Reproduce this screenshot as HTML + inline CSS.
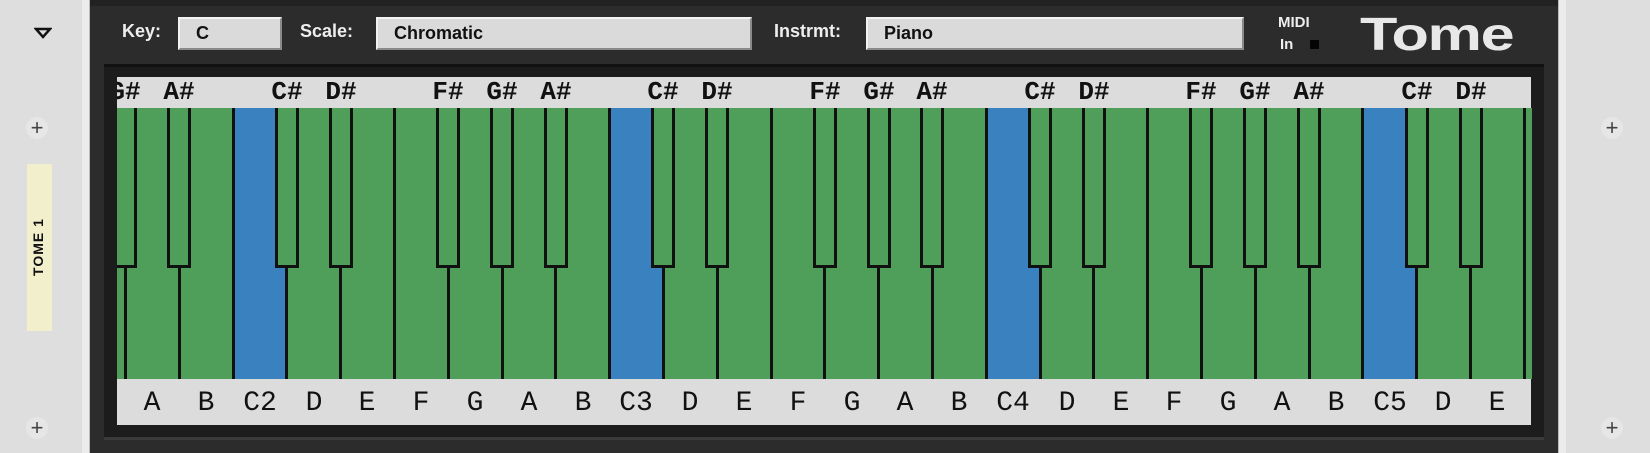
<!DOCTYPE html>
<html><head><meta charset="utf-8"><style>
*{margin:0;padding:0;box-sizing:border-box}
body{width:1650px;height:453px;overflow:hidden;background:#dcdcdc;position:relative;font-family:"Liberation Sans",sans-serif}
.a{position:absolute}
.rail{background:#dedede}
.plus{position:absolute;width:22px;height:22px;border-radius:50%;background:#e6e6e6;color:#444;font-size:22px;line-height:22px;text-align:center;font-weight:normal}
.lbl{position:absolute;color:#eee;font-weight:bold;font-size:18px;top:21px}
.box{position:absolute;top:17px;height:33px;background:#dadada;border-top:2px solid #f2f2f2;border-left:2px solid #f2f2f2;border-bottom:2px solid #8a8a8a;border-right:2px solid #8a8a8a;font-weight:bold;font-size:18px;line-height:28px;padding-left:16px;color:#111}
.sep{position:absolute;top:108px;width:3px;height:271px;background:#111}
.blk{position:absolute;top:108px;width:24px;height:160px;background:#4f9f5b;border:3px solid #111;border-top:none}
.blue{position:absolute;top:108px;height:271px;background:#3a82bf}
.t{position:absolute;top:78px;width:60px;margin-left:-30px;text-align:center;font-family:"Liberation Mono",monospace;font-weight:bold;font-size:26px;color:#111;line-height:28px}
.b{position:absolute;top:388px;width:60px;margin-left:-30px;text-align:center;font-family:"Liberation Mono",monospace;font-size:28px;color:#111;line-height:32px}
</style></head><body>
<div class="a rail" style="left:0;top:0;width:82px;height:453px"></div>
<div class="a" style="left:82px;top:0;width:8px;height:453px;background:#ececec;border-right:1px solid #bbb"></div>
<div class="a" style="left:1558px;top:0;width:8px;height:453px;background:#ececec;border-left:1px solid #bbb"></div>
<div class="a rail" style="left:1566px;top:0;width:84px;height:453px"></div>
<svg class="a" style="left:34px;top:27px" width="18" height="12"><polygon points="2,2 16,2 9,10" fill="none" stroke="#111" stroke-width="2.5"/></svg>
<div class="plus" style="left:26px;top:117px">+</div>
<div class="plus" style="left:26px;top:417px">+</div>
<div class="plus" style="left:1601px;top:117px">+</div>
<div class="plus" style="left:1601px;top:417px">+</div>
<div class="a" style="left:27px;top:164px;width:25px;height:167px;background:#f2efcc"></div>
<div class="a" style="left:-20px;top:237px;width:120px;height:20px;transform:rotate(-90deg);text-align:center;font-weight:bold;font-size:14px;color:#111;letter-spacing:1px">TOME 1</div>

<div class="a" style="left:90px;top:0;width:1468px;height:453px;background:#2c2c2c"></div>
<div class="a" style="left:90px;top:0;width:1468px;height:6px;background:#222"></div>
<div class="a" style="left:104px;top:64px;width:1440px;height:376px;background:#1c1c1c;border-top:3px solid #111;border-bottom:3px solid #3a3a3a"></div>

<div class="lbl" style="left:122px">Key:</div>
<div class="box" style="left:178px;width:104px">C</div>
<div class="lbl" style="left:300px">Scale:</div>
<div class="box" style="left:376px;width:376px">Chromatic</div>
<div class="lbl" style="left:774px">Instrmt:</div>
<div class="box" style="left:866px;width:378px">Piano</div>
<div class="a" style="left:1278px;top:14px;color:#eee;font-weight:bold;font-size:15px">MIDI</div>
<div class="a" style="left:1280px;top:36px;color:#eee;font-weight:bold;font-size:15px">In</div>
<div class="a" style="left:1310px;top:40px;width:9px;height:9px;background:#050505"></div>
<div class="a" style="left:1360px;top:9px;color:#e8e8e8;font-weight:bold;font-size:46px;line-height:50px;transform:scaleX(1.33);transform-origin:left;letter-spacing:-1px">Tome</div>

<div class="a" style="left:117px;top:77px;width:1414px;height:31px;background:#dcdcdc"></div>
<div class="a" style="left:117px;top:108px;width:1415px;height:271px;background:#4f9f5b"></div>
<div class="a" style="left:117px;top:379px;width:1414px;height:46px;background:#dcdcdc"></div>

<div class="a" style="left:117px;top:0;width:1415px;height:453px;overflow:hidden">
<div style="position:absolute;left:-117px;top:0;width:1650px;height:453px">
<div class="blue" style="left:233px;width:54px"></div>
<div class="blue" style="left:610px;width:54px"></div>
<div class="blue" style="left:986px;width:54px"></div>
<div class="blue" style="left:1363px;width:54px"></div>
<div class="sep" style="left:124px"></div><div class="sep" style="left:178px"></div><div class="sep" style="left:232px"></div><div class="sep" style="left:285px"></div><div class="sep" style="left:339px"></div><div class="sep" style="left:393px"></div><div class="sep" style="left:447px"></div><div class="sep" style="left:501px"></div><div class="sep" style="left:554px"></div><div class="sep" style="left:608px"></div><div class="sep" style="left:662px"></div><div class="sep" style="left:716px"></div><div class="sep" style="left:770px"></div><div class="sep" style="left:823px"></div><div class="sep" style="left:877px"></div><div class="sep" style="left:931px"></div><div class="sep" style="left:985px"></div><div class="sep" style="left:1039px"></div><div class="sep" style="left:1092px"></div><div class="sep" style="left:1146px"></div><div class="sep" style="left:1200px"></div><div class="sep" style="left:1254px"></div><div class="sep" style="left:1308px"></div><div class="sep" style="left:1361px"></div><div class="sep" style="left:1415px"></div><div class="sep" style="left:1469px"></div><div class="sep" style="left:1523px"></div>
<div class="blk" style="left:113px"></div><div class="blk" style="left:167px"></div><div class="blk" style="left:275px"></div><div class="blk" style="left:329px"></div><div class="blk" style="left:436px"></div><div class="blk" style="left:490px"></div><div class="blk" style="left:544px"></div><div class="blk" style="left:651px"></div><div class="blk" style="left:705px"></div><div class="blk" style="left:813px"></div><div class="blk" style="left:867px"></div><div class="blk" style="left:920px"></div><div class="blk" style="left:1028px"></div><div class="blk" style="left:1082px"></div><div class="blk" style="left:1189px"></div><div class="blk" style="left:1243px"></div><div class="blk" style="left:1297px"></div><div class="blk" style="left:1405px"></div><div class="blk" style="left:1459px"></div>
<div class="t" style="left:125px">G#</div><div class="t" style="left:179px">A#</div><div class="t" style="left:287px">C#</div><div class="t" style="left:341px">D#</div><div class="t" style="left:448px">F#</div><div class="t" style="left:502px">G#</div><div class="t" style="left:556px">A#</div><div class="t" style="left:663px">C#</div><div class="t" style="left:717px">D#</div><div class="t" style="left:825px">F#</div><div class="t" style="left:879px">G#</div><div class="t" style="left:932px">A#</div><div class="t" style="left:1040px">C#</div><div class="t" style="left:1094px">D#</div><div class="t" style="left:1201px">F#</div><div class="t" style="left:1255px">G#</div><div class="t" style="left:1309px">A#</div><div class="t" style="left:1417px">C#</div><div class="t" style="left:1471px">D#</div>
<div class="b" style="left:152px">A</div><div class="b" style="left:206px">B</div><div class="b" style="left:260px">C2</div><div class="b" style="left:314px">D</div><div class="b" style="left:367px">E</div><div class="b" style="left:421px">F</div><div class="b" style="left:475px">G</div><div class="b" style="left:529px">A</div><div class="b" style="left:583px">B</div><div class="b" style="left:636px">C3</div><div class="b" style="left:690px">D</div><div class="b" style="left:744px">E</div><div class="b" style="left:798px">F</div><div class="b" style="left:852px">G</div><div class="b" style="left:905px">A</div><div class="b" style="left:959px">B</div><div class="b" style="left:1013px">C4</div><div class="b" style="left:1067px">D</div><div class="b" style="left:1121px">E</div><div class="b" style="left:1174px">F</div><div class="b" style="left:1228px">G</div><div class="b" style="left:1282px">A</div><div class="b" style="left:1336px">B</div><div class="b" style="left:1390px">C5</div><div class="b" style="left:1443px">D</div><div class="b" style="left:1497px">E</div>
</div></div>
</body></html>
